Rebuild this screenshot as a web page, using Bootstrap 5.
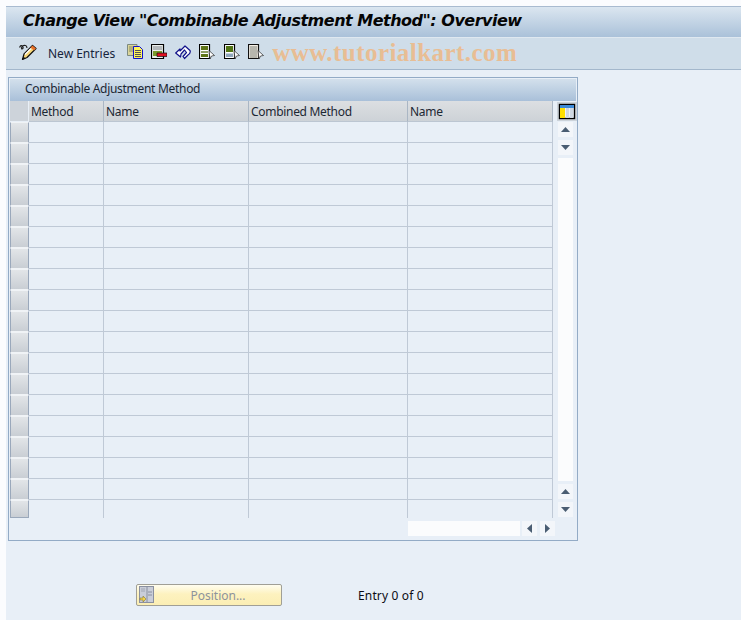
<!DOCTYPE html>
<html lang="en"><head><meta charset="utf-8"><title>Change View</title>
<link href="https://cdn.jsdelivr.net/npm/bootstrap@5.3.0/dist/css/bootstrap.min.css" rel="stylesheet">
<style>
html,body{height:100%}
body{background:#fbfcfe;font-family:"Noto Sans","Open Sans",sans-serif;font-size:12px;color:#1c2733;overflow:hidden}
.sap-shell{margin-left:6px;padding-top:6px;height:620px;display:flex;flex-direction:column}
.sap-main{flex:1;background:#e8eff7;display:flex;flex-direction:column}
.sap-title{height:31px;border-top:1px solid #a9bbd0;background:linear-gradient(#dbe6f0,#aac1d9);padding-left:17px;font-family:"DejaVu Sans",sans-serif;font-weight:700;font-style:italic;font-size:16px;letter-spacing:-.5px;line-height:27px;color:#050505;white-space:nowrap}
.sap-tools{height:33px;background:#cfdde9;border-top:1px solid #dfe8f0;border-bottom:1px solid #a3b7cc;padding-left:13px;white-space:nowrap}
.sap-tools svg{display:block;flex:none;margin-right:8px;margin-bottom:3px}
.sap-tools svg.sap-pen{margin-right:0}
.sap-new{margin:0 12px 0 11px;color:#16243c}
.sap-mark{font-family:"Liberation Serif",serif;font-weight:700;font-size:25px;color:#e8bd94;letter-spacing:.45px;line-height:28px;margin-bottom:2px}
.sap-panel{width:570px;height:464px;margin:7px 0 0 2px;border:1px solid #93abc6;padding:1px;flex:none}
.sap-head{height:22px;background:linear-gradient(#d3e0ec,#a9c0d9);padding-left:15px;line-height:20px;color:#1c2733;letter-spacing:-.3px}
.sap-body{height:418px}
.sap-grid{table-layout:fixed;width:543px;border-collapse:separate;border-spacing:0;flex:none;align-self:flex-start}
.sap-grid th{height:21px;background:linear-gradient(#dcdfe2,#cdd2d7);font-weight:400;padding:1px 0 0 2px;border-right:1px solid #aab6c4;border-bottom:1px solid #bcc6d2;line-height:19px;color:#1c2733;overflow:hidden;white-space:nowrap;letter-spacing:-.3px}
.sap-grid td{height:21px;padding:0;border-right:1px solid #bfc9d6;border-bottom:1px solid #bfc9d6;background:#e8eff7}
.sap-grid tr:last-child td{border-bottom:0;height:18px}
.sap-grid .sap-rowb{background:linear-gradient(#e2e5e8,#c9ced4);border:1px solid #f0f3f6;border-left:1px solid #9aa8bb;border-right:1px solid #9aa8bb}
.sap-grid th.sap-corner{background:#cdd3da;border-bottom:1px solid #e8eff7;border-right:1px solid #e8eff7}
.sap-grid tr:last-child td.sap-rowb{border-bottom:1px solid #9aa8bb}
.c0{width:19px}.c1{width:75px}.c2{width:145px}.c3{width:159px}.c4{width:145px}
.sap-vs{width:25px;padding-top:1px}
.sap-cfg{width:20px;height:19px;background:#ccd3da;padding:1px;margin:0 auto 1px 4px}
.sap-btn{width:15px;height:15px;background:#f3f6fa;display:flex;align-items:center;justify-content:center;flex:none}
.sap-vbtns{margin-left:5px;gap:3px}
.sap-track{width:15px;height:323px;background:#fbfcfd}
.sap-hs{margin:2px 0 0 398px;gap:3px;height:15px}
.sap-htrack{width:112px;background:#fbfcfd}
.sap-hs .sap-btn{margin-left:-1px}
.sap-foot{margin:43px 0 0 130px;height:22px}
.sap-pos{width:146px;height:22px;border:1px solid #a09f96;border-radius:2px;background:linear-gradient(#fffdf0,#fdf2bf 45%,#fbeeb4);color:#8d939c;padding:1px 0 0;font-size:12px;line-height:19px;position:relative;text-align:center}
.sap-pos svg{position:absolute;left:2px;top:1px}
.sap-pos span{padding-left:18px}
.sap-entry{margin-left:76px;color:#0c0c14;padding-top:2px;letter-spacing:.15px}
</style></head><body>
<div class="sap-shell"><div class="sap-main">
<div class="sap-title">Change View "Combinable Adjustment Method": Overview</div>
<div class="sap-tools d-flex align-items-center">
<svg class="sap-pen" width="18" height="16" viewBox="0 0 18 16"><path d="M.5 3.500 Q2 .5 3.500 2 Q5 4.500 3 5 Q1.500 3.500 4.500 1.500 Q7.500 .5 8 4" fill="none" stroke="#222" stroke-width="1.200"/><path d="M13.500 1.500 L17 4.500 L8 13.500 L3.500 15.500 L5 10 Z" fill="#f8d777" stroke="#111" stroke-width="1.200" stroke-linejoin="round"/><path d="M13.500 1.500 L17 4.500 L15 6.500 L11.500 3.500 Z" fill="#e8702a"/><path d="M6 10.500 L12 4.500" stroke="#fff" stroke-width="1.200"/><path d="M3.500 15.500 L4.500 12.500 L6.500 14.500 Z" fill="#111"/></svg>
<span class="sap-new">New Entries</span>
<svg width="16" height="16" viewBox="0 0 16 16"><path d="M.5 .5 H10 V11.500 H.5 Z" fill="#d9d49a" stroke="#7d8a80"/><path d="M2 3 H9 M2 5 H9 M2 7 H9" stroke="#8a8a60"/><path d="M6.500 2.500 H12.500 L15.500 5.500 V14.500 H6.500 Z" fill="#fff35c" stroke="#1111cc"/><path d="M8 6.500 H14 M8 8.500 H14 M8 10.500 H14 M8 12.500 H14" stroke="#555"/></svg>
<svg width="16" height="16" viewBox="0 0 16 16"><path d="M.5 .5 H12.500 V14.500 H.5 Z" fill="#eef1ee" stroke="#000" stroke-width="1.200"/><path d="M2 3 H11 M2 5 H11" stroke="#7a8088"/><path d="M2 7 H11 V12 H2 Z" fill="#7d9a2c"/><path d="M6 9 H16 V12.500 H6 Z" fill="#e01020" stroke="#111" stroke-width=".7"/></svg>
<svg width="16" height="16" viewBox="0 0 16 16"><path d="M.7 9 L5 5 V7 L10 2 L15 6.500 Q16 9 13 11 L9.500 14.500 L8 12.500 L11.500 8.500 L9.500 6 L6 10 L5.500 13 Z" fill="#fff" stroke="#10108a" stroke-width="1.200" stroke-linejoin="round"/></svg>
<svg width="16" height="16" viewBox="0 0 16 16"><path d="M.5 .5 H10.500 V14.500 H.5 Z" fill="#fff" stroke="#000" stroke-width="1.200"/><path d="M2 2 H9 V6 H2 Z M2 10 H9 V13 H2 Z" fill="#5f7518"/><path d="M2 7 H9 V9 H2 Z" fill="#8d9c64"/><path d="M10 6.500 L15.500 11.500 L12.500 12 L11 15 Z" fill="#fff" stroke="#222" stroke-width=".7"/></svg>
<svg width="16" height="16" viewBox="0 0 16 16" style="margin-left:1px"><path d="M.5 .5 H10.500 V14.500 H.5 Z" fill="#fff" stroke="#000" stroke-width="1.200"/><path d="M2 2 H9 V8 H2 Z" fill="#527516"/><path d="M2 9.500 H9 V13 H2 Z" fill="#8fa5bb"/><path d="M10 6.500 L15.500 11.500 L12.500 12 L11 15 Z" fill="#fff" stroke="#222" stroke-width=".7"/></svg>
<svg width="16" height="16" viewBox="0 0 16 16"><path d="M.5 .5 H10.500 V14.500 H.5 Z" fill="#f5f0e6" stroke="#111" stroke-width="1.200"/><path d="M2 3 H9 M2 5 H9 M2 7 H9 M2 9 H9 M2 11 H9 M2 13 H9" stroke="#7b7f76"/><path d="M10 6.500 L15.500 11.500 L12.500 12 L11 15 Z" fill="#fff" stroke="#222" stroke-width=".7"/></svg>
<span class="sap-mark">www.tutorialkart.com</span>
</div>
<div class="sap-panel">
<div class="sap-head">Combinable Adjustment Method</div>
<div class="sap-body d-flex">
<table class="sap-grid" id="grid">
<colgroup><col class="c0"><col class="c1"><col class="c2"><col class="c3"><col class="c4"></colgroup>
<thead><tr><th class="sap-corner"></th><th>Method</th><th>Name</th><th>Combined Method</th><th>Name</th></tr></thead>
<tbody>
<tr><td class="sap-rowb"></td><td></td><td></td><td></td><td></td></tr>
<tr><td class="sap-rowb"></td><td></td><td></td><td></td><td></td></tr>
<tr><td class="sap-rowb"></td><td></td><td></td><td></td><td></td></tr>
<tr><td class="sap-rowb"></td><td></td><td></td><td></td><td></td></tr>
<tr><td class="sap-rowb"></td><td></td><td></td><td></td><td></td></tr>
<tr><td class="sap-rowb"></td><td></td><td></td><td></td><td></td></tr>
<tr><td class="sap-rowb"></td><td></td><td></td><td></td><td></td></tr>
<tr><td class="sap-rowb"></td><td></td><td></td><td></td><td></td></tr>
<tr><td class="sap-rowb"></td><td></td><td></td><td></td><td></td></tr>
<tr><td class="sap-rowb"></td><td></td><td></td><td></td><td></td></tr>
<tr><td class="sap-rowb"></td><td></td><td></td><td></td><td></td></tr>
<tr><td class="sap-rowb"></td><td></td><td></td><td></td><td></td></tr>
<tr><td class="sap-rowb"></td><td></td><td></td><td></td><td></td></tr>
<tr><td class="sap-rowb"></td><td></td><td></td><td></td><td></td></tr>
<tr><td class="sap-rowb"></td><td></td><td></td><td></td><td></td></tr>
<tr><td class="sap-rowb"></td><td></td><td></td><td></td><td></td></tr>
<tr><td class="sap-rowb"></td><td></td><td></td><td></td><td></td></tr>
<tr><td class="sap-rowb"></td><td></td><td></td><td></td><td></td></tr>
<tr><td class="sap-rowb"></td><td></td><td></td><td></td><td></td></tr>
</tbody></table>
<div class="sap-vs">
<div class="sap-cfg"><svg width="18" height="17" viewBox="0 0 18 17" class="d-block"><rect x="1.500" y="1.500" width="15" height="14" fill="#eef2f6" stroke="#000" stroke-width="1.400"/><rect x="2" y="2" width="14" height="3" fill="#3d8ad8"/><rect x="2" y="5" width="5" height="10" fill="#ffe000"/><rect x="8" y="5" width="3" height="10" fill="#cfd8e2"/><rect x="12" y="5" width="3" height="10" fill="#cfd8e2"/></svg></div>
<div class="d-flex flex-column sap-vbtns">
<div class="sap-btn"><svg width="9" height="5"><path d="M4.500 0 L9 5 H0 Z" fill="#4a5d72"/></svg></div>
<div class="sap-btn"><svg width="9" height="5"><path d="M4.500 5 L9 0 H0 Z" fill="#4a5d72"/></svg></div>
<div class="sap-track"></div>
<div class="sap-btn"><svg width="9" height="5"><path d="M4.500 0 L9 5 H0 Z" fill="#4a5d72"/></svg></div>
<div class="sap-btn"><svg width="9" height="5"><path d="M4.500 5 L9 0 H0 Z" fill="#4a5d72"/></svg></div>
</div></div>
</div>
<div class="d-flex sap-hs">
<div class="sap-htrack"></div>
<div class="sap-btn"><svg width="5" height="9"><path d="M0 4.500 L5 0 V9 Z" fill="#4a5d72"/></svg></div>
<div class="sap-btn ms-0"><svg width="5" height="9"><path d="M5 4.500 L0 0 V9 Z" fill="#4a5d72"/></svg></div>
</div>
</div>
<div class="sap-foot d-flex align-items-center">
<button type="button" class="sap-pos"><svg width="16" height="18" viewBox="0 0 16 18"><rect x=".5" y=".5" width="14" height="16" fill="#c9cdd8" stroke="#8a90a0"/><path d="M8 1 V16 M9 6 H13 M9 9 H13" stroke="#8a90a0"/><path d="M2 3 H6 M2 5 H6" stroke="#a0a6b4"/><path d="M1 12 H4 V10 L7 13 L4 16 V14 H1 Z" fill="#f2d24c" stroke="#8a7a30" stroke-width=".6"/></svg><span>Position...</span></button>
<span class="sap-entry">Entry 0 of 0</span>
</div>
</div></div>
</body></html>
